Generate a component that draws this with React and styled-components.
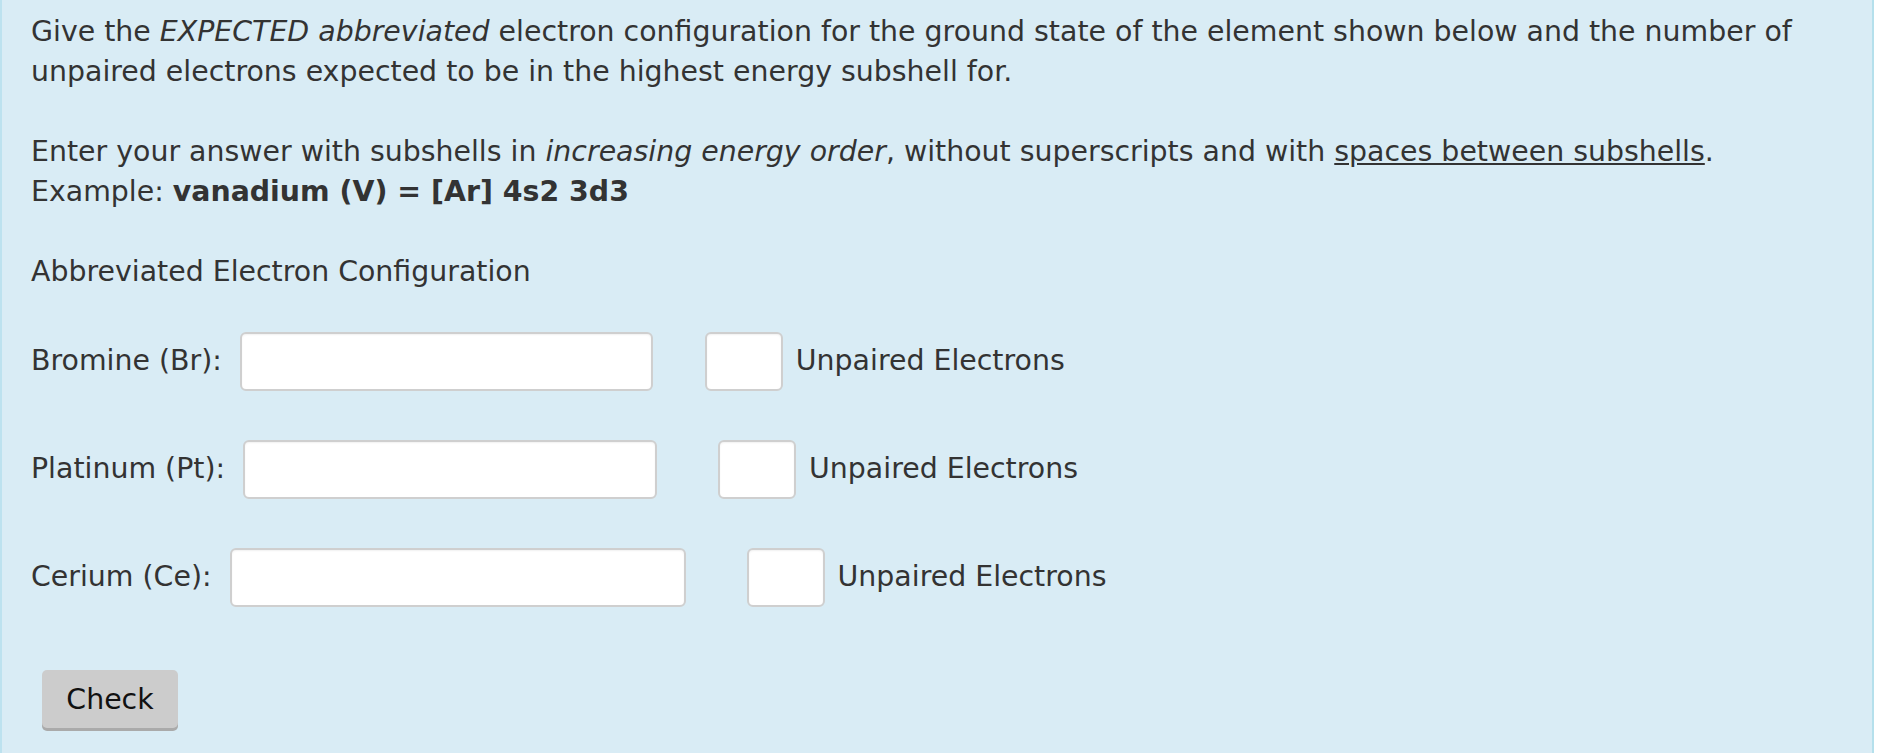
import React from "react";
import styled, { createGlobalStyle } from "styled-components";

const GlobalStyle = createGlobalStyle`
    html, body {
        margin: 0;
        padding: 0;
        background: #ffffff;
    }
`;

const rows = [
    { label: "Bromine (Br):", width: 413, spacing: 52 },
    { label: "Platinum (Pt):", width: 414, spacing: 61 },
    { label: "Cerium (Ce):", width: 456, spacing: 61 },
];

const App = () => {
    return (
        <>
            <GlobalStyle />
            <Panel>
                <Para>
                    Give the <em>EXPECTED abbreviated</em> electron configuration for
                    the ground state of the element shown below and the number of
                    unpaired electrons expected to be in the highest energy subshell
                    for.
                </Para>
                <Para>
                    Enter your answer with subshells in <em>increasing energy order</em>,
                    without superscripts and with <u>spaces between subshells</u>.
                    <br />
                    Example: <strong>vanadium (V) = [Ar] 4s2 3d3</strong>
                </Para>
                <Para>Abbreviated Electron Configuration</Para>
                <Rows>
                    {rows.map((row) => (
                        <Row key={row.label}>
                            <Label>{row.label}</Label>
                            <ConfigInput type="text" $width={row.width} />
                            <CountInput type="text" $spacing={row.spacing} />
                            <Unit>Unpaired Electrons</Unit>
                        </Row>
                    ))}
                </Rows>
                <CheckButton>Check</CheckButton>
            </Panel>
        </>
    );
};

export default App;

const Panel = styled.div`
    box-sizing: border-box;
    width: 1874px;
    min-height: 753px;
    padding: 12px 0 0 29px;
    background: #d9ecf5;
    border-left: 2px solid #bde2ef;
    border-right: 2px solid #b5e0ec;
    font-family: "DejaVu Sans", Verdana, sans-serif;
    font-size: 28.4px;
    line-height: 40px;
    color: #333333;
`;

const Para = styled.p`
    margin: 0 0 40px;
    max-width: 1810px;
`;

const Rows = styled.div`
    display: flex;
    flex-direction: column;
    gap: 50px;
`;

const Row = styled.div`
    display: flex;
    align-items: center;
    height: 58px;
`;

const Label = styled.span`
    margin-right: 18px;
`;

const BoxInput = styled.input`
    box-sizing: border-box;
    height: 59px;
    margin: 0;
    padding: 0 10px;
    background: #ffffff;
    border: 2px solid #cfcfcf;
    border-radius: 6px;
    box-shadow: inset 0 1px 2px rgba(0, 0, 0, 0.06);
    font: inherit;
    outline: none;
`;

const ConfigInput = styled(BoxInput)`
    width: ${(props) => props.$width}px;
`;

const CountInput = styled(BoxInput)`
    width: 78px;
    margin-left: ${(props) => props.$spacing}px;
`;

const Unit = styled.span`
    margin-left: 13px;
`;

const CheckButton = styled.button`
    display: block;
    box-sizing: border-box;
    width: 136px;
    height: 58px;
    margin: 64px 0 0 11px;
    padding: 0;
    background: #cccccc;
    border: none;
    border-radius: 5px;
    box-shadow: 0 3px 0 #aaaaaa;
    font-family: "DejaVu Sans", Verdana, sans-serif;
    font-size: 28.4px;
    color: #111111;
    cursor: pointer;
`;
